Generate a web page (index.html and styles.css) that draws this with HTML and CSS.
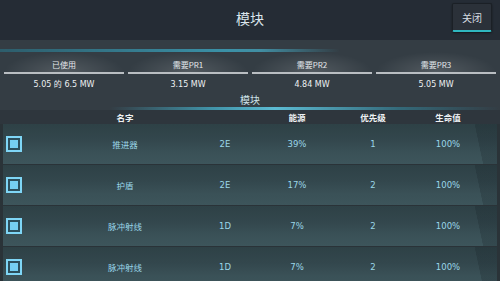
FILE: index.html
```html
<!DOCTYPE html>
<html>
<head>
<meta charset="utf-8">
<link rel="stylesheet" href="styles.css">
</head>
<body>
<div class="screen">
  <header class="topbar">
    <div class="title">模块</div>
    <button class="close">关闭</button>
  </header>
  <section class="summary">
    <div class="glow-line"></div>
    <div class="stats">
      <div class="stat"><div class="stat-label">已使用</div><div class="stat-rule"></div><div class="stat-value">5.05 的 6.5 MW</div></div>
      <div class="stat"><div class="stat-label">需要PR1</div><div class="stat-rule"></div><div class="stat-value">3.15 MW</div></div>
      <div class="stat"><div class="stat-label">需要PR2</div><div class="stat-rule"></div><div class="stat-value">4.84 MW</div></div>
      <div class="stat"><div class="stat-label">需要PR3</div><div class="stat-rule"></div><div class="stat-value">5.05 MW</div></div>
    </div>
  </section>
  <section class="modules">
    <div class="section-title">模块</div>
    <div class="section-glow"></div>
    <div class="thead">
      <div></div><div>名字</div><div></div><div>能源</div><div>优先级</div><div>生命值</div>
    </div>
    <div class="row">
      <div class="chk"><span class="box"></span></div><div>推进器</div><div>2E</div><div>39%</div><div>1</div><div>100%</div>
    </div>
    <div class="row">
      <div class="chk"><span class="box"></span></div><div>护盾</div><div>2E</div><div>17%</div><div>2</div><div>100%</div>
    </div>
    <div class="row">
      <div class="chk"><span class="box"></span></div><div>脉冲射线</div><div>1D</div><div>7%</div><div>2</div><div>100%</div>
    </div>
    <div class="row">
      <div class="chk"><span class="box"></span></div><div>脉冲射线</div><div>1D</div><div>7%</div><div>2</div><div>100%</div>
    </div>
  </section>
</div>
</body>
</html>
```
FILE: styles.css
```css
* { box-sizing: border-box; }
html, body { margin: 0; padding: 0; }
body {
  width: 500px; height: 281px; overflow: hidden;
  background: #2a3338;
  font-family: "DejaVu Sans", "Noto Sans CJK SC", sans-serif;
}
.screen { width: 500px; height: 281px; display: flex; flex-direction: column; overflow: hidden; }
.topbar {
  height: 40px; flex: none; background: #252c35;
  display: flex; align-items: center; justify-content: center;
  position: relative;
}
.title { color: #dbe6ec; font-size: 14px; font-family: "Noto Sans CJK SC", sans-serif; margin-top: -4px; }
.close {
  position: absolute; right: 8px; top: 3px;
  width: 40px; height: 29px;
  background: #2b3139; border: 1px solid #1b2026; border-bottom: 2px solid #2fb7c0;
  border-radius: 2px;
  box-shadow: 0 1px 2px rgba(0,0,0,0.5);
  color: #d6dde2; font-size: 10px; font-family: "Noto Sans CJK SC", sans-serif;
  padding: 0;
}
.summary {
  flex: none;
  background: #343d44; height: 53px; padding-top: 9px;
}
.glow-line {
  height: 3px;
  background: linear-gradient(90deg, rgba(40,120,140,0.55) 0%, rgba(60,160,185,0.85) 45%, rgba(70,170,195,0.75) 52%, rgba(52,61,68,0) 68%);
  filter: blur(0.6px);
}
.stats {
  display: grid; grid-template-columns: repeat(4, 1fr); gap: 4px;
  padding: 0 4px;
}
.stat { display: flex; flex-direction: column; align-items: center; }
.stat-label {
  width: 100%; text-align: center; color: #e4e8eb; font-size: 8px; height: 20px;
  padding-top: 8px; line-height: 10px;
  font-family: "Noto Sans CJK SC", sans-serif;
  background: radial-gradient(ellipse 50% 100% at 50% 100%, rgba(255,255,255,0.15), rgba(255,255,255,0) 100%);
}
.stat-rule { width: 100%; height: 2px; background: #b9bec2; }
.stat-value { color: #eef1f3; font-size: 8px; margin-top: 6px; line-height: 10px; }
.modules { flex: 1; display: flex; flex-direction: column; background: #2a3338; }
.section-title {
  flex: none;
  height: 14px; text-align: center; color: #cfe3ea; font-size: 10px; line-height: 14px;
  font-family: "Noto Sans CJK SC", sans-serif; background: #343d44;
}
.section-glow {
  flex: none;
  height: 3px;
  background: linear-gradient(90deg, rgba(52,61,68,1) 22%, rgba(70,170,195,0.8) 42%, rgba(95,195,220,0.95) 55%, rgba(60,150,175,0.55) 80%, rgba(52,61,68,1) 100%);
  filter: blur(0.5px);
}
.thead, .row {
  display: grid; flex: none;
  grid-template-columns: 47px 150px 50px 94px 58px 92px;
  align-items: center; text-align: center;
}
.thead {
  height: 14px; color: #eef2f4; font-size: 8.5px; font-weight: bold;
  font-family: "Noto Sans CJK SC", sans-serif;
  background: #2e363d; padding-left: 3px;
}
.row {
  height: 40px; margin: 0 3px 1px 3px;
  color: #9ad6e8; font-size: 8.5px;
  font-family: "DejaVu Sans", "Noto Sans CJK SC", sans-serif;
  background:
    linear-gradient(78deg, rgba(0,0,0,0) 95.5%, rgba(20,30,35,0.22) 95.6%),
    linear-gradient(180deg, #2e4146 0%, #33474d 40%, #3a5157 72%, #3d555b 100%);
}
.chk { display: flex; justify-content: flex-start; padding-left: 3px; }
.box {
  width: 16px; height: 16px; background: #76cff2;
  border: 2px solid #7fd6f6; box-shadow: inset 0 0 0 2px #2c4f5c;
  display: block;
}
```
